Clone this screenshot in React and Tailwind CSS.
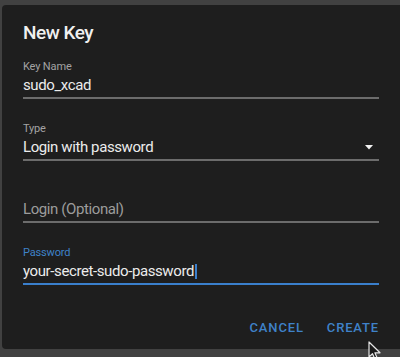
import React from 'react';

const BLUE = 'text-[#3f82c9]';

function Field({ label, value, placeholder, focused, select }) {
  return (
    <div className="flex flex-col">
      <div
        className={`h-[14px] text-[11px] leading-[14px] tracking-[-0.15px] ${
          focused ? BLUE : 'text-[#a3a3a3]'
        }`}
      >
        {label}
      </div>
      <div
        className={`relative flex items-center pb-[1px] ${
          focused ? 'border-b-2 border-[#3a7fcc]' : 'border-b-2 border-[#6c6c6c]'
        }`}
      >
        <span
          className={`text-[15px] leading-[22px] tracking-[-0.4px] ${
            value ? 'text-[#ececec]' : 'text-[#9c9c9c]'
          }`}
        >
          {value || placeholder}
        </span>
        {focused && <span className="ml-[1px] w-[2px] h-[15px] bg-[#3a7fcc]" />}
        {select && (
          <svg
            className="absolute right-[6px] top-[9px]"
            width="8"
            height="5"
            viewBox="0 0 8 5"
          >
            <path d="M0 0h8L4 4.5z" fill="#f2f2f2" />
          </svg>
        )}
      </div>
    </div>
  );
}

export default function App() {
  return (
    <div
      className="relative w-[400px] h-[357px] overflow-hidden bg-[#414141] pt-[5px] pl-[2px]"
      style={{ fontFamily: 'Roboto, "Liberation Sans", sans-serif' }}
    >
      <div className="w-[398px] h-[344px] bg-[#1e1e1e] rounded-l-[4px] px-[21px] pt-[12px] flex flex-col">
        <h2 className="text-[19px] leading-[32px] font-medium tracking-[-0.5px] text-[#f0f0f0]">
          New Key
        </h2>

        <div className="mt-[11px] flex flex-col gap-[23px]">
          <Field label="Key Name" value="sudo_xcad" />
          <Field label="Type" value="Login with password" select />
          <Field label="" placeholder="Login (Optional)" />
          <Field label="Password" value="your-secret-sudo-password" focused />
        </div>

        <div className="mt-[33px] flex justify-end gap-[23px]">
          <button className={`text-[13px] leading-[20px] font-medium tracking-[0.85px] ${BLUE}`}>
            CANCEL
          </button>
          <button className={`text-[13px] leading-[20px] font-medium tracking-[0.85px] ${BLUE}`}>
            CREATE
          </button>
        </div>
      </div>

      {/* mouse pointer */}
      <svg className="absolute left-[368px] top-[341px]" width="14" height="20" viewBox="0 0 14 20">
        <path
          d="M1 1v15l3.5-3.3 2.6 6 2.4-1-2.6-5.9H12z"
          fill="#1a1a1a"
          stroke="#e6e6e6"
          strokeWidth="1.2"
          strokeLinejoin="round"
        />
      </svg>
    </div>
  );
}
